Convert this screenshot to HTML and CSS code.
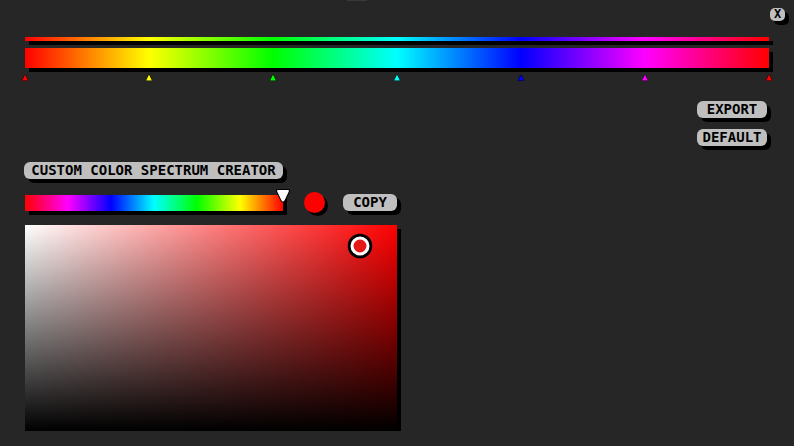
FILE: index.html
```html
<!DOCTYPE html>
<html lang="en">
<head>
<meta charset="utf-8">
<title>Custom Color Spectrum Creator</title>
<link rel="stylesheet" href="styles.css">
</head>
<body>
<div class="handle"></div>
<header class="topbar"><button class="btn close" aria-label="Close">X</button></header>
<main>
  <section class="spectrum">
    <div class="bar preview"></div>
    <div class="bar editor"></div>
    <div class="stops">
      <button class="stop red" aria-label="Red stop"><svg viewBox="0 0 8 8"><path d="M3.6 1.2H4.4L6.9 6.4H1.1Z"/></svg></button>
      <button class="stop yellow" aria-label="Yellow stop"><svg viewBox="0 0 8 8"><path d="M3.6 1.2H4.4L6.9 6.4H1.1Z"/></svg></button>
      <button class="stop green" aria-label="Green stop"><svg viewBox="0 0 8 8"><path d="M3.6 1.2H4.4L6.9 6.4H1.1Z"/></svg></button>
      <button class="stop cyan" aria-label="Cyan stop"><svg viewBox="0 0 8 8"><path d="M3.6 1.2H4.4L6.9 6.4H1.1Z"/></svg></button>
      <button class="stop blue" aria-label="Blue stop"><svg viewBox="0 0 8 8"><path d="M3.6 1.2H4.4L6.9 6.4H1.1Z"/></svg></button>
      <button class="stop magenta" aria-label="Magenta stop"><svg viewBox="0 0 8 8"><path d="M3.6 1.2H4.4L6.9 6.4H1.1Z"/></svg></button>
      <button class="stop red" aria-label="Last red stop"><svg viewBox="0 0 8 8"><path d="M3.6 1.2H4.4L6.9 6.4H1.1Z"/></svg></button>
    </div>
  </section>
  <div class="actions">
    <button class="btn">EXPORT</button>
    <button class="btn">DEFAULT</button>
  </div>
  <section class="creator">
    <h1 class="btn title">CUSTOM COLOR SPECTRUM CREATOR</h1>
    <div class="controls">
      <div class="hue">
        <input type="range" min="0" max="360" value="360" aria-label="Hue">
        <svg class="pointer" viewBox="0 0 14 14"><path d="M2 1H12Q13.6 1 12.8 2.6L8.6 11.2Q7 13.6 5.4 11.2L1.2 2.6Q.4 1 2 1Z"/></svg>
      </div>
      <span class="swatch"></span>
      <button class="btn copy">COPY</button>
    </div>
    <div class="picker">
      <svg class="ring" viewBox="0 0 26 26"><circle cx="13" cy="13" r="12.3"/><circle class="inner" cx="13" cy="13" r="8"/></svg>
    </div>
  </section>
</main>
</body>
</html>
```
FILE: styles.css
```css
* { box-sizing: border-box; }

body {
  margin: 0;
  background: #262626;
  color: #000;
  font: bold 14px/17px "DejaVu Sans Mono", monospace;
}

button { font: inherit; color: inherit; border: 0; padding: 0; }

.handle {
  position: absolute;
  top: 0;
  left: 347px;
  width: 20px;
  height: 1px;
  background: #393939;
}

.topbar {
  display: flex;
  justify-content: flex-end;
  padding: 8px 9px 16px;
}

.btn {
  height: 17px;
  border-radius: 6px;
  background: #bfbfbf;
  box-shadow: 4px 4px 0 #000;
  text-align: center;
  white-space: nowrap;
}

.close {
  width: 15px;
  height: 13px;
  border-radius: 5px;
  font-size: 12px;
  line-height: 13px;
}

main { padding: 0 25px; }

.bar {
  background: linear-gradient(to right, #f00, #ff0, #0f0, #0ff, #00f, #f0f, #f00);
  box-shadow: 4px 4px 0 #000;
}

.preview { height: 4px; margin-bottom: 7px; }
.editor { height: 20px; }

.stops {
  display: flex;
  justify-content: space-between;
  margin: 6px -4px 0;
}

.stop { width: 8px; height: 8px; background: none; }
.stop svg { display: block; width: 8px; height: 8px; overflow: visible; }
.stop path { fill: currentColor; stroke: #000; stroke-width: 1; stroke-linejoin: round; paint-order: stroke; }
.red { color: #f00; }
.yellow { color: #ff0; }
.green { color: #0f0; }
.cyan { color: #0ff; }
.blue { color: #00f; }
.magenta { color: #f0f; }

.actions {
  display: flex;
  flex-direction: column;
  align-items: flex-end;
  gap: 11px;
  margin-top: 19px;
  padding-right: 2px;
}

.actions .btn { width: 70px; }

.creator { width: 50%; margin-top: 16px; }

.title {
  width: 259px;
  margin: 0 0 15px -1px;
  font-size: inherit;
}

.controls {
  display: flex;
  align-items: center;
  height: 17px;
  margin-bottom: 14px;
}

.hue {
  position: relative;
  flex: 1;
  height: 16px;
  background: linear-gradient(to left, #f00, #ff0, #0f0, #0ff, #00f, #f0f, #f00);
  box-shadow: 4px 4px 0 #000;
}

.hue input {
  position: absolute;
  inset: 0;
  width: 100%;
  height: 100%;
  margin: 0;
  opacity: 0;
}

.pointer {
  position: absolute;
  top: -6px;
  right: -7px;
  width: 14px;
  height: 14px;
  overflow: visible;
  fill: #fff;
  stroke: #000;
  stroke-width: 2;
  paint-order: stroke;
  pointer-events: none;
}

.swatch {
  width: 21px;
  height: 21px;
  margin: 0 18px 0 21px;
  border-radius: 50%;
  background: #f00;
  box-shadow: 3px 3px 0 #000;
}

.copy { width: 54px; }

.picker {
  position: relative;
  height: 206px;
  background: linear-gradient(to bottom, transparent, #000), linear-gradient(to right, #fff, #f00);
  box-shadow: 4px 4px 0 #000;
}

.ring {
  position: absolute;
  left: 90%;
  top: 10%;
  width: 26px;
  height: 26px;
  margin: -13px;
}

.ring .inner { fill: #e61717; stroke: #fff; stroke-width: 3; }
```
